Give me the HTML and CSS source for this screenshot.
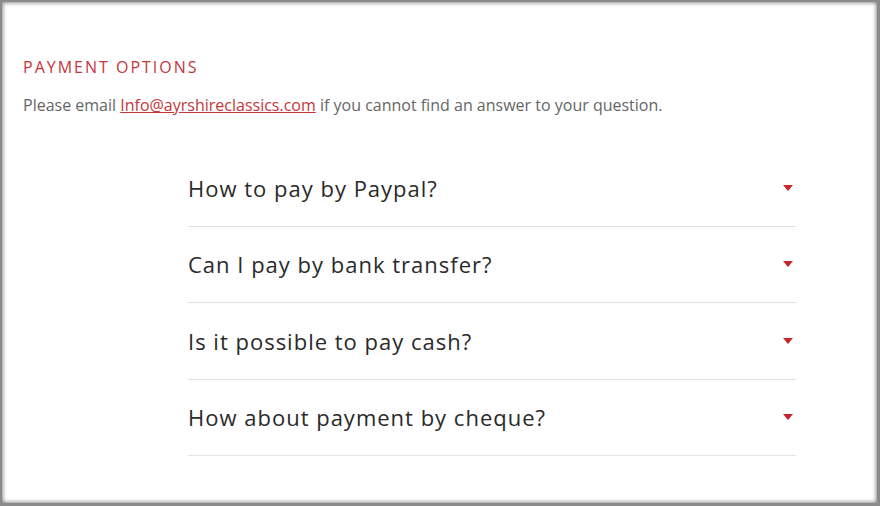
FILE: index.html
```html
<!DOCTYPE html>
<html>
<head>
<meta charset="utf-8">
<link rel="stylesheet" href="styles.css">
</head>
<body>
<div class="frame">
  <h2 class="title">PAYMENT OPTIONS</h2>
  <p class="intro">Please email <a href="#" class="mail">Info@ayrshireclassics.com</a> if you cannot find an answer to your question.</p>
  <div class="faq">
    <div class="item"><span class="q">How to pay by Paypal?</span><span class="caret"></span></div>
    <div class="item"><span class="q">Can I pay by bank transfer?</span><span class="caret"></span></div>
    <div class="item"><span class="q">Is it possible to pay cash?</span><span class="caret"></span></div>
    <div class="item"><span class="q">How about payment by cheque?</span><span class="caret"></span></div>
  </div>
</div>
</body>
</html>
```
FILE: styles.css
```css
html, body {
  margin: 0;
  padding: 0;
  background: #fff;
}
.frame {
  box-sizing: border-box;
  width: 880px;
  height: 506px;
  border: 2px solid #8a8a8a;
  border-right-width: 3px;
  border-bottom-width: 3px;
  box-shadow: inset 1px 1px 4px rgba(0,0,0,0.35), inset -1px -1px 4px rgba(0,0,0,0.35);
  padding: 0 0 0 21px;
  font-family: "Open Sans", sans-serif;
  overflow: hidden;
}
.title {
  margin: 55px 0 0;
  font-size: 16px;
  font-weight: 400;
  letter-spacing: 2px;
  color: #c3373b;
  line-height: 20px;
}
.intro {
  margin: 18px 0 0;
  font-size: 16px;
  line-height: 20px;
  color: #666;
}
.mail {
  color: #c3373b;
  text-decoration: underline;
}
.faq {
  margin: 35px 0 0 165px;
  width: 608px;
}
.item {
  display: flex;
  align-items: center;
  justify-content: space-between;
  border-bottom: 1px solid #e2e2e2;
  box-sizing: border-box;
  height: 76.5px;
}
.q {
  font-size: 22px;
  letter-spacing: 1px;
  color: #2a2a2a;
}
.caret {
  width: 0;
  height: 0;
  border-left: 5px solid transparent;
  border-right: 5px solid transparent;
  border-top: 6px solid #c1272d;
  margin: 0 3px 0 0;
}
```
